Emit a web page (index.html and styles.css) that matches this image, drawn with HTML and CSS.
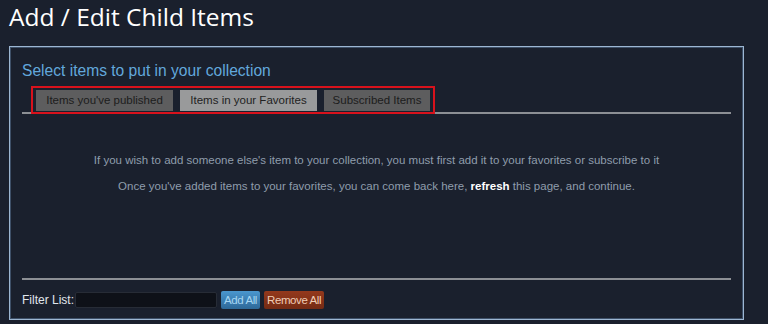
FILE: index.html
```html
<!DOCTYPE html>
<html>
<head>
<meta charset="utf-8">
<link rel="stylesheet" href="styles.css">
</head>
<body>
<h1 class="title">Add / Edit Child Items</h1>
<div class="panel">
  <h2 class="subtitle">Select items to put in your collection</h2>
  <div class="tabrow">
    <div class="highlight">
      <div class="tab wide">Items you've published</div>
      <div class="tab wide active">Items in your Favorites</div>
      <div class="tab narrow">Subscribed Items</div>
    </div>
  </div>
  <div class="message">
    <p>If you wish to add someone else's item to your collection, you must first add it to your favorites or subscribe to it</p>
    <p>Once you've added items to your favorites, you can come back here, <b>refresh</b> this page, and continue.</p>
  </div>
  <div class="footer">
    <span class="label">Filter List:</span>
    <input class="filter" type="text">
    <button class="btn add">Add All</button>
    <button class="btn remove">Remove All</button>
  </div>
</div>
</body>
</html>
```

FILE: styles.css
```css
html, body {
  margin: 0;
  padding: 0;
  background: #1a202d;
  height: 100%;
}
body {
  font-family: "Liberation Sans", Arial, sans-serif;
  color: #c6d4df;
  overflow: hidden;
}
.title {
  margin: 0;
  padding: 0 0 0 9px;
  font-family: "Open Sans", "Noto Sans", sans-serif;
  font-weight: 400;
  font-size: 24.5px;
  line-height: 34px;
  color: #ffffff;
  height: 46px;
  box-sizing: border-box;
}
.panel {
  margin-left: 9px;
  width: 735px;
  height: 274px;
  box-sizing: border-box;
  border: 1px solid #9cb6d2;
  box-shadow: inset 0 0 0 1px #3e5068;
  padding: 15px 12px 0 12px;
  display: flex;
  flex-direction: column;
}
.subtitle {
  margin: 0;
  font-weight: 400;
  font-size: 15.6px;
  line-height: 18px;
  color: #62a8dc;
}
.tabrow {
  margin-top: 6px;
  border-bottom: 2px solid #8c8f94;
  display: flex;
}
.highlight {
  margin-left: 9px;
  margin-bottom: -2px;
  border: 2px solid #d8121c;
  padding: 2px 3px 1px 3px;
  display: flex;
  gap: 7px;
}
.tab {
  height: 21px;
  line-height: 21px;
  text-align: center;
  white-space: nowrap;
  font-size: 11.5px;
  background: #5d5d5e;
  color: #1c1c1c;
}
.tab.wide {
  width: 137px;
}
.tab.narrow {
  width: 106px;
}
.tab.active {
  background: #999a9b;
  color: #222;
}
.message {
  margin-top: 33px;
  height: 131px;
  text-align: center;
  font-size: 11.5px;
  color: #8f9dac;
}
.message p {
  margin: 0;
  line-height: 26px;
}
.message b {
  color: #ffffff;
}
.footer {
  border-top: 2px solid #8c8f94;
  display: flex;
  align-items: center;
  padding-top: 11px;
  gap: 4px;
}
.label {
  font-size: 12px;
  color: #e0e6ec;
  width: 49px;
  white-space: nowrap;
}
.filter {
  width: 142px;
  height: 16px;
  box-sizing: border-box;
  margin: 0;
  padding: 0 4px;
  background: #0e1118;
  border: 1px solid #272c36;
  border-radius: 2px;
  color: #c6d4df;
}
.btn {
  height: 18px;
  margin: 0;
  padding: 0 3px;
  border: none;
  border-radius: 2px;
  white-space: nowrap;
  font-family: "Liberation Sans", Arial, sans-serif;
  font-size: 11.5px;
  letter-spacing: -0.4px;
  line-height: 18px;
}
.btn.add {
  background: linear-gradient(to bottom, #4a97cf 0%, #2d6898 100%);
  color: #a6d6f3;
}
.btn.remove {
  background: linear-gradient(to bottom, #94391c 0%, #742b14 100%);
  color: #f0cdb6;
}
```
